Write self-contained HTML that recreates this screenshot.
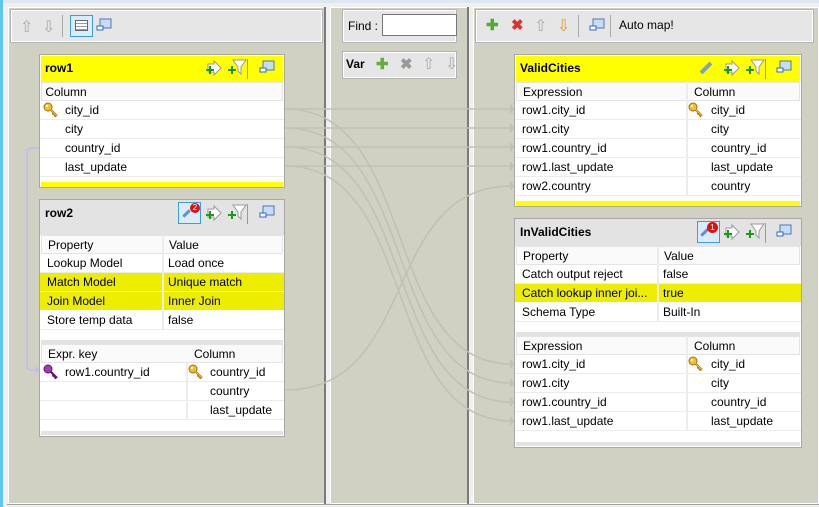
<!DOCTYPE html>
<html><head><meta charset="utf-8"><style>
*{margin:0;padding:0;box-sizing:border-box}
body{width:819px;height:507px;overflow:hidden;background:#f0f0f0;font-family:"Liberation Sans",sans-serif;font-size:12px;color:#000;position:relative}
.a{position:absolute}
.bg{background:#d1d1c3}
.tb{background:#e6e6e6;border:1px solid #b4b4b4;box-shadow:inset 0 0 0 1px #fff}
.tbl{background:#fff;border:1px solid #a8a8a8}
.row{position:absolute;left:0;right:0;height:19px;border-bottom:1px solid #ececec;line-height:18px}
.hd{background:#fafafa;border:1px solid #e4e4e4}
.y{background:#eded00}
.c{position:absolute;top:0;height:19px;line-height:18px;white-space:nowrap}
.yh{background:#ffff00}
.gh{background:#e3e3e3}
b{font-weight:bold}
</style></head><body>
<svg width="0" height="0" style="position:absolute">
<defs>
<symbol id="key" viewBox="0 0 16 16"><circle cx="5" cy="5" r="4" fill="#f0c030" stroke="#a07010"/><circle cx="4" cy="4" r="1.2" fill="#fff6c0"/><path d="M7.5 7.5 L14 14 M11 11 L9.5 12.5 M13 13 L11.5 14.5" stroke="#a07010" stroke-width="2.2" fill="none"/><path d="M7.5 7.5 L14 14" stroke="#f0c030" stroke-width="1" fill="none"/></symbol>
<symbol id="pkey" viewBox="0 0 16 16"><circle cx="5" cy="5" r="4" fill="#a040b0" stroke="#601070"/><path d="M7.5 7.5 L14 14 M11 11 L9.5 12.5 M13 13 L11.5 14.5" stroke="#601070" stroke-width="2.2" fill="none"/></symbol>
<symbol id="addout" viewBox="0 0 20 18"><path d="M5 4 H11 V1 L18 8 L11 15 V12 H5Z" fill="#fff" stroke="#999"/><path d="M3 9 H6 V6 H8 V9 H11 V11 H8 V14 H6 V11 H3Z" fill="#1a9a1a"/></symbol>
<symbol id="filt" viewBox="0 0 20 18"><path d="M6 1 H19 L14 8 V15 L11 12 V8Z" fill="#fff" stroke="#999"/><path d="M1 10 H4 V7 H6 V10 H9 V12 H6 V15 H4 V12 H1Z" fill="#1a9a1a"/></symbol>
<symbol id="win" viewBox="0 0 16 14"><rect x="4" y="1" width="11" height="9" fill="#c8dcf4" stroke="#4a78b8"/><rect x="1" y="8" width="6" height="4" fill="#fff" stroke="#2a6ad0"/></symbol>
</defs></svg>
<div class="a" style="left:0;top:0;width:3px;height:507px;background:#5ec6f0"></div>
<div class="a" style="left:3px;top:0;width:816px;height:3px;background:#dce8f0"></div>
<div class="a bg" style="left:8px;top:7px;width:317px;height:497px;border:1px solid #fff"></div>
<div class="a" style="left:324px;top:7px;width:2px;height:497px;background:#7a7a7a"></div>
<div class="a bg" style="left:330px;top:7px;width:138px;height:497px;border:1px solid #fff"></div>
<div class="a" style="left:467px;top:7px;width:2px;height:497px;background:#7a7a7a"></div>
<div class="a bg" style="left:473px;top:7px;width:346px;height:497px;border:1px solid #fff"></div>
<div class="a" style="left:7px;top:504px;width:812px;height:1px;background:#a0a0a0"></div>

<svg class="a" style="left:0;top:0" width="819" height="507">
<g fill="none" stroke="#c2c2b2" stroke-width="1.6">
<path d="M285 109 L512 109"/><path d="M285 128 L512 128"/><path d="M285 147 L512 147"/><path d="M285 166 L512 166"/>
<path d="M285 109 C420 109 380 364 512 364"/><path d="M285 128 C420 128 380 383 512 383"/><path d="M285 147 C420 147 380 402 512 402"/><path d="M285 166 C420 166 380 421 512 421"/>
<path d="M285 390 C420 390 380 186 512 186"/>
</g>
<g fill="#c2c2b2"><path d="M510 104 L515 109 L510 114Z"/><path d="M510 123 L515 128 L510 133Z"/><path d="M510 142 L515 147 L510 152Z"/><path d="M510 161 L515 166 L510 171Z"/><path d="M510 181 L515 186 L510 191Z"/><path d="M510 359 L515 364 L510 369Z"/><path d="M510 378 L515 383 L510 388Z"/><path d="M510 397 L515 402 L510 407Z"/><path d="M510 416 L515 421 L510 426Z"/></g>
<path d="M39 148 L32 148 Q27 148 27 153 L27 365 Q27 370 32 370 L36 370" fill="none" stroke="#c8bde6" stroke-width="2"/>
<path d="M35 366 L40 370 L35 374Z" fill="#c8bde6"/>
</svg>

<div class="a tb" style="left:10px;top:9px;width:313px;height:34px"></div>
<div class="a" style="left:20px;top:17px;color:#aaa;font-size:16px">⇧</div>
<div class="a" style="left:42px;top:17px;color:#aaa;font-size:16px">⇩</div>
<div class="a" style="left:62px;top:15px;width:1px;height:22px;background:#aaa"></div>
<div class="a" style="left:70px;top:15px;width:23px;height:22px;border:1px solid #3c9ce0;background:#d8ecfa"></div>
<div class="a" style="left:75px;top:20px;width:13px;height:11px;border:1px solid #667;background:repeating-linear-gradient(#fff 0 2px,#99a 2px 3px)"></div>
<svg class="a" style="left:96px;top:18px" width="16" height="14"><use href="#win"/></svg>

<div class="a tbl" style="left:39px;top:54px;width:246px;height:134px">
 <div class="a yh" style="left:1px;top:1px;width:242px;height:26px"></div>
 <b class="a" style="left:5px;top:6px">row1</b>
 <svg class="a" style="left:163px;top:5px" width="20" height="18"><use href="#addout"/></svg>
 <svg class="a" style="left:187px;top:4px" width="20" height="18"><use href="#filt"/></svg>
 <div class="a" style="left:207px;top:4px;width:1px;height:20px;background:#999"></div>
 <svg class="a" style="left:219px;top:5px" width="16" height="14"><use href="#win"/></svg>
 <div class="row hd" style="top:27px;left:1px;right:1px">&nbsp;Column</div>
 <div class="row" style="top:46px"><svg class="a" style="left:3px;top:1px" width="16" height="16"><use href="#key"/></svg><span class="c" style="left:25px">city_id</span></div>
 <div class="row" style="top:65px"><span class="c" style="left:25px">city</span></div>
 <div class="row" style="top:84px"><span class="c" style="left:25px">country_id</span></div>
 <div class="row" style="top:103px"><span class="c" style="left:25px">last_update</span></div>
 <div class="a yh" style="left:1px;top:127px;width:242px;height:5px"></div>
</div>

<div class="a tbl" style="left:39px;top:199px;width:246px;height:238px">
 <div class="a gh" style="left:0;top:0;width:244px;height:35px"></div>
 <b class="a" style="left:5px;top:6px">row2</b>
 <div class="a" style="left:138px;top:2px;width:23px;height:22px;border:1px solid #3c9ce0;background:#d8ecfa"></div>
 <div class="a" style="left:142px;top:12px;width:9px;height:3px;background:#6090d0;transform:rotate(-45deg)"></div>
 <div class="a" style="left:150px;top:3px;width:10px;height:10px;border-radius:5px;background:#e01010;color:#fff;font-size:8px;line-height:10px;text-align:center">2</div>
 <svg class="a" style="left:163px;top:5px" width="20" height="18"><use href="#addout"/></svg>
 <svg class="a" style="left:187px;top:4px" width="20" height="18"><use href="#filt"/></svg>
 <div class="a" style="left:207px;top:4px;width:1px;height:20px;background:#999"></div>
 <svg class="a" style="left:219px;top:5px" width="16" height="14"><use href="#win"/></svg>
 <div class="row hd" style="top:35px;left:1px;right:1px"><span class="c" style="left:6px">Property</span><span class="c" style="left:127px">Value</span></div>
 <div class="row" style="top:54px"><span class="c" style="left:7px">Lookup Model</span><span class="c" style="left:128px">Load once</span></div>
 <div class="row y" style="top:73px;border-bottom:1px solid #fff"><span class="c" style="left:7px">Match Model</span><span class="c" style="left:128px">Unique match</span></div>
 <div class="row y" style="top:92px;border-bottom:1px solid #fff"><span class="c" style="left:7px">Join Model</span><span class="c" style="left:128px">Inner Join</span></div>
 <div class="row" style="top:111px"><span class="c" style="left:7px">Store temp data</span><span class="c" style="left:128px">false</span></div>
 <div class="a" style="left:122px;top:35px;width:2px;height:95px;background:#ececec"></div>
 <div class="a" style="left:1px;top:140px;width:242px;height:4px;background:#e3e3e3"></div>
 <div class="row hd" style="top:144px;left:1px;right:1px"><span class="c" style="left:6px">Expr. key</span><span class="c" style="left:152px">Column</span></div>
 <div class="row" style="top:163px"><svg class="a" style="left:3px;top:1px" width="16" height="16"><use href="#pkey"/></svg><span class="c" style="left:25px">row1.country_id</span><svg class="a" style="left:148px;top:1px" width="16" height="16"><use href="#key"/></svg><span class="c" style="left:170px">country_id</span></div>
 <div class="row" style="top:182px"><span class="c" style="left:170px">country</span></div>
 <div class="row" style="top:201px"><span class="c" style="left:170px">last_update</span></div>
 <div class="a" style="left:146px;top:163px;width:2px;height:57px;background:#ececec"></div>
 <div class="a" style="left:1px;top:231px;width:242px;height:4px;background:#e3e3e3"></div>
</div>

<div class="a tb" style="left:342px;top:9px;width:115px;height:34px"></div>
<div class="a" style="left:348px;top:19px">Find :</div>
<div class="a" style="left:382px;top:14px;width:75px;height:22px;background:#fff;border:1px solid #777"></div>
<div class="a tb" style="left:342px;top:51px;width:115px;height:28px"></div>
<b class="a" style="left:346px;top:57px">Var</b>
<div class="a" style="left:376px;top:55px;color:#6a4;font-size:15px;font-weight:bold">✚</div>
<div class="a" style="left:400px;top:55px;color:#999;font-size:15px;font-weight:bold">✖</div>
<div class="a" style="left:422px;top:54px;color:#aaa;font-size:16px">⇧</div>
<div class="a" style="left:445px;top:54px;color:#aaa;font-size:16px;width:11px;overflow:hidden">⇩</div>

<div class="a tb" style="left:475px;top:9px;width:339px;height:34px"></div>
<div class="a" style="left:486px;top:16px;color:#5a3;font-size:15px;font-weight:bold">✚</div>
<div class="a" style="left:511px;top:16px;color:#e03030;font-size:15px;font-weight:bold">✖</div>
<div class="a" style="left:534px;top:16px;color:#aaa;font-size:16px">⇧</div>
<div class="a" style="left:557px;top:16px;color:#d8a020;font-size:16px">⇩</div>
<div class="a" style="left:578px;top:15px;width:1px;height:22px;background:#aaa"></div>
<svg class="a" style="left:589px;top:18px" width="16" height="14"><use href="#win"/></svg>
<div class="a" style="left:610px;top:15px;width:1px;height:22px;background:#aaa"></div>
<div class="a" style="left:619px;top:18px">Auto map!</div>

<div class="a tbl" style="left:514px;top:54px;width:288px;height:153px">
 <div class="a yh" style="left:1px;top:1px;width:284px;height:26px"></div>
 <b class="a" style="left:5px;top:6px">ValidCities</b>
 <div class="a" style="left:184px;top:11px;width:14px;height:4px;background:#7aa0d0;transform:rotate(-45deg)"></div>
 <svg class="a" style="left:206px;top:5px" width="20" height="18"><use href="#addout"/></svg>
 <svg class="a" style="left:230px;top:4px" width="20" height="18"><use href="#filt"/></svg>
 <div class="a" style="left:250px;top:4px;width:1px;height:20px;background:#999"></div>
 <svg class="a" style="left:261px;top:5px" width="16" height="14"><use href="#win"/></svg>
 <div class="row hd" style="top:27px;left:1px;right:1px"><span class="c" style="left:6px">Expression</span><span class="c" style="left:177px">Column</span></div>
 <div class="row" style="top:46px"><span class="c" style="left:7px">row1.city_id</span><svg class="a" style="left:173px;top:1px" width="16" height="16"><use href="#key"/></svg><span class="c" style="left:196px">city_id</span></div>
 <div class="row" style="top:65px"><span class="c" style="left:7px">row1.city</span><span class="c" style="left:196px">city</span></div>
 <div class="row" style="top:84px"><span class="c" style="left:7px">row1.country_id</span><span class="c" style="left:196px">country_id</span></div>
 <div class="row" style="top:103px"><span class="c" style="left:7px">row1.last_update</span><span class="c" style="left:196px">last_update</span></div>
 <div class="row" style="top:122px"><span class="c" style="left:7px">row2.country</span><span class="c" style="left:196px">country</span></div>
 <div class="a" style="left:171px;top:27px;width:2px;height:114px;background:#ececec"></div>
 <div class="a yh" style="left:1px;top:146px;width:284px;height:5px"></div>
</div>

<div class="a tbl" style="left:514px;top:218px;width:288px;height:230px">
 <div class="a gh" style="left:0;top:0;width:286px;height:27px"></div>
 <b class="a" style="left:5px;top:6px">InValidCities</b>
 <div class="a" style="left:182px;top:2px;width:23px;height:22px;border:1px solid #3c9ce0;background:#d8ecfa"></div>
 <div class="a" style="left:185px;top:12px;width:9px;height:3px;background:#6090d0;transform:rotate(-45deg)"></div>
 <div class="a" style="left:192px;top:3px;width:11px;height:11px;border-radius:6px;background:#e01010;color:#fff;font-size:8px;line-height:11px;text-align:center">1</div>
 <svg class="a" style="left:206px;top:5px" width="20" height="18"><use href="#addout"/></svg>
 <svg class="a" style="left:230px;top:4px" width="20" height="18"><use href="#filt"/></svg>
 <div class="a" style="left:250px;top:4px;width:1px;height:20px;background:#999"></div>
 <svg class="a" style="left:261px;top:5px" width="16" height="14"><use href="#win"/></svg>
 <div class="row hd" style="top:27px;left:1px;right:1px"><span class="c" style="left:6px">Property</span><span class="c" style="left:147px">Value</span></div>
 <div class="row" style="top:46px"><span class="c" style="left:7px">Catch output reject</span><span class="c" style="left:148px">false</span></div>
 <div class="row y" style="top:65px;border-bottom:1px solid #fff"><span class="c" style="left:7px">Catch lookup inner joi...</span><span class="c" style="left:148px">true</span></div>
 <div class="row" style="top:84px"><span class="c" style="left:7px">Schema Type</span><span class="c" style="left:148px">Built-In</span></div>
 <div class="a" style="left:142px;top:27px;width:2px;height:76px;background:#ececec"></div>
 <div class="a" style="left:1px;top:113px;width:284px;height:4px;background:#e3e3e3"></div>
 <div class="row hd" style="top:117px;left:1px;right:1px"><span class="c" style="left:6px">Expression</span><span class="c" style="left:177px">Column</span></div>
 <div class="row" style="top:136px"><span class="c" style="left:7px">row1.city_id</span><svg class="a" style="left:173px;top:1px" width="16" height="16"><use href="#key"/></svg><span class="c" style="left:196px">city_id</span></div>
 <div class="row" style="top:155px"><span class="c" style="left:7px">row1.city</span><span class="c" style="left:196px">city</span></div>
 <div class="row" style="top:174px"><span class="c" style="left:7px">row1.country_id</span><span class="c" style="left:196px">country_id</span></div>
 <div class="row" style="top:193px"><span class="c" style="left:7px">row1.last_update</span><span class="c" style="left:196px">last_update</span></div>
 <div class="a" style="left:171px;top:117px;width:2px;height:95px;background:#ececec"></div>
 <div class="a" style="left:1px;top:223px;width:284px;height:4px;background:#e3e3e3"></div>
</div>
</body></html>
